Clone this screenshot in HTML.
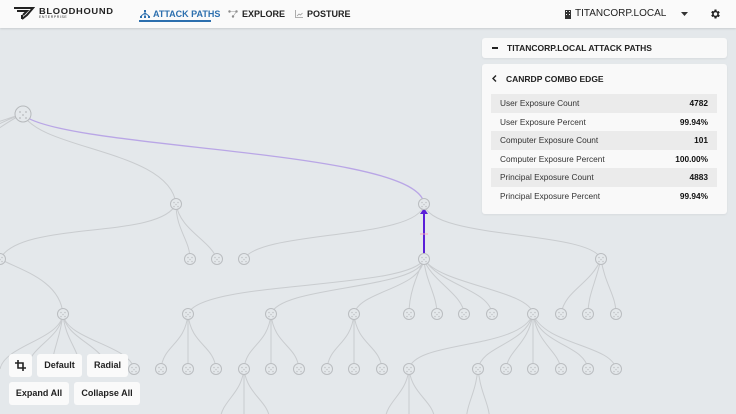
<!DOCTYPE html>
<html><head><meta charset="utf-8"><style>
*{box-sizing:border-box;margin:0;padding:0}
body{width:736px;height:414px;overflow:hidden;background:#e4e8eb;font-family:"Liberation Sans",sans-serif;position:relative}
.hdr{position:absolute;left:0;top:0;width:736px;height:28px;background:#fafafa;box-shadow:0 1px 2px rgba(0,0,0,.12);z-index:3}
.nav{position:absolute;top:9px;font-size:9px;font-weight:bold;color:#222}
.card{position:absolute;background:#f9f9f9;border-radius:3px;box-shadow:0 1px 2px rgba(0,0,0,.06)}
.row{position:absolute;left:9px;width:226px;height:18.5px;font-size:8.3px;color:#333;line-height:18.5px;padding:0 9px}
.row b{position:absolute;right:9px;color:#111}
.g{background:#ebebeb}
.btn{position:absolute;background:#fafafa;border-radius:3px;font-size:9px;font-weight:bold;color:#222;text-align:center;line-height:22px;height:23px}
</style></head><body>
<div class="hdr">
<svg style="position:absolute;left:13px;top:7px" width="22" height="13" viewBox="0 0 22 13"><path d="M1 1h19l-6 7-5 4M4 4h10l-4 4M9 8v4" fill="none" stroke="#222" stroke-width="2"/></svg>
<div style="position:absolute;left:39px;top:6px;font-size:8.5px;font-weight:bold;letter-spacing:.6px;color:#222;transform:scaleX(1.1);transform-origin:left">BLOODHOUND</div>
<div style="position:absolute;left:39px;top:15px;font-size:3.5px;letter-spacing:.6px;color:#333">ENTERPRISE</div>
<svg style="position:absolute;left:140px;top:10px" width="10" height="8"><g fill="#2c6fae"><rect x="4" y="0" width="2" height="2"/><rect x="0" y="6" width="2" height="2"/><rect x="4" y="6" width="2" height="2"/><rect x="8" y="6" width="2" height="2"/></g><path d="M5 2v4M1 6l4-3 4 3" stroke="#2c6fae" fill="none"/></svg>
<div class="nav" style="left:153px;color:#2c6fae">ATTACK PATHS</div>
<div style="position:absolute;left:139px;top:20px;width:72px;height:2px;background:#2c6fae"></div>
<svg style="position:absolute;left:228px;top:10px" width="10" height="8"><g fill="#888"><circle cx="1.5" cy="1.5" r="1.2"/><circle cx="8.5" cy="1.5" r="1.2"/><circle cx="5" cy="6.5" r="1.2"/></g><path d="M1.5 1.5h7M5 6.5L8.5 1.5" stroke="#999" stroke-width=".6"/></svg>
<div class="nav" style="left:242px">EXPLORE</div>
<svg style="position:absolute;left:295px;top:10px" width="8" height="8"><path d="M.5 0v7.5H8M2 6l2-2 1.5 1L7.5 3" stroke="#999" fill="none" stroke-width=".8"/></svg>
<div class="nav" style="left:307px">POSTURE</div>
<svg style="position:absolute;left:565px;top:10px" width="6" height="9"><rect x="0" y="0" width="6" height="9" fill="#333"/><g fill="#fff"><rect x="1" y="1" width="1" height="1"/><rect x="4" y="1" width="1" height="1"/><rect x="1" y="4" width="1" height="1"/><rect x="4" y="4" width="1" height="1"/></g></svg>
<div style="position:absolute;left:575px;top:8px;font-size:10px;color:#222">TITANCORP.LOCAL</div>
<svg style="position:absolute;left:681px;top:12px" width="7" height="4"><path d="M0 0h7L3.5 4z" fill="#333"/></svg>
<svg style="position:absolute;left:709px;top:8px" width="12" height="12" viewBox="0 0 24 24"><path fill="#222" d="M19.4 13a7.5 7.5 0 000-2l2.1-1.6-2-3.5-2.5 1a7 7 0 00-1.7-1L15 3h-4l-.4 2.8a7 7 0 00-1.7 1l-2.5-1-2 3.5L6.5 11a7.5 7.5 0 000 2l-2.1 1.6 2 3.5 2.5-1a7 7 0 001.7 1L11 21h4l.4-2.8a7 7 0 001.7-1l2.5 1 2-3.5zM13 15.5a3.5 3.5 0 110-7 3.5 3.5 0 010 7z"/></svg>
</div>

<svg style="position:absolute;left:0;top:0" width="736" height="414" fill="none" stroke="#c9cccf" stroke-width="1">
<defs><g id="n"><circle r="5.5" fill="#e4e8eb" stroke="#babdc0"/><g fill="#c2c5c8" stroke="none"><circle cx="-2" cy="-1.5" r=".8"/><circle cx="2" cy="-1.5" r=".8"/><circle cx="0" cy="0.5" r=".8"/><circle cx="-2" cy="2.5" r=".8"/><circle cx="2" cy="2.5" r=".8"/></g></g></defs>
<path d="M23 114C10 118 0 124-10 128M23 114C10 120 0 128-10 134M23 114C8 118 0 122-10 124"/>
<path d="M23 114C40 150 170 150 176 204"/>
<path d="M176 204C160 240 20 220 0 259M176 204C176 230 190 240 190 259M176 204C180 230 210 240 217 259"/>
<path d="M424 204C420 240 260 230 244 259M424 204C424 230 424 240 424 259M424 204C430 240 590 230 601 259"/>
<path d="M0 259C20 270 60 280 63 314"/>
<path d="M424 259C410 290 200 280 188 314M424 259C420 290 280 285 271 314M424 259C420 290 360 290 354 314M424 259C415 280 409 295 409 314M424 259C425 280 437 295 437 314M424 259C430 280 464 295 464 314M424 259C440 285 490 290 492 314M424 259C440 285 530 290 533 314"/>
<path d="M601 259C590 285 565 290 561 314M601 259C595 285 588 295 588 314M601 259C605 285 616 295 616 314"/>
<path d="M63 314C60 340 5 345 0 369M63 314C60 340 30 345 27 369M63 314C60 340 52 350 52 369M63 314C65 340 80 350 80 369M63 314C66 340 105 345 107 369M63 314C66 340 130 345 134 369"/>
<path d="M188 314C185 345 163 345 161 369M188 314V369M188 314C191 345 214 345 216 369"/>
<path d="M271 314C268 345 246 345 244 369M271 314V369M271 314C274 345 297 345 299 369"/>
<path d="M354 314C351 345 329 345 327 369M354 314V369M354 314C357 345 380 345 382 369"/>
<path d="M533 314C520 350 415 340 409 369M533 314C525 345 482 345 478 369M533 314C528 345 508 350 506 369M533 314V369M533 314C538 345 558 350 561 369M533 314C540 345 585 345 588 369M533 314C545 345 612 345 616 369"/>
<path d="M244 369C241 395 222 400 220 420M244 369V420M244 369C247 395 268 400 270 420M409 369C406 395 387 400 385 420M409 369V420M409 369C412 395 433 400 435 420M478 369C475 395 468 400 466 420M478 369C481 395 488 400 490 420"/>
<path d="M26 117C80 150 420 150 424 204" stroke="#b9a6e6" stroke-width="1.3"/>
<path d="M424 259V212" stroke="#5a1fd8" stroke-width="2"/><path d="M420 214l4-6 4 6z" fill="#5a1fd8" stroke="none"/>
<path d="M420 234h8" stroke="#f2a8c0" stroke-width="1"/>
<circle cx="23" cy="114" r="8" fill="#e4e8eb" stroke="#b6b9bc"/>
<g fill="#c2c5c8" stroke="none"><circle cx="20" cy="112" r="1"/><circle cx="26" cy="112" r="1"/><circle cx="23" cy="115" r="1"/><circle cx="20" cy="118" r="1"/><circle cx="26" cy="118" r="1"/></g>
<use href="#n" x="176" y="204"/><use href="#n" x="424" y="204"/>
<use href="#n" x="0" y="259"/><use href="#n" x="190" y="259"/><use href="#n" x="217" y="259"/><use href="#n" x="244" y="259"/><use href="#n" x="424" y="259"/><use href="#n" x="601" y="259"/>
<use href="#n" x="63" y="314"/><use href="#n" x="188" y="314"/><use href="#n" x="271" y="314"/><use href="#n" x="354" y="314"/><use href="#n" x="409" y="314"/><use href="#n" x="437" y="314"/><use href="#n" x="464" y="314"/><use href="#n" x="492" y="314"/><use href="#n" x="533" y="314"/><use href="#n" x="561" y="314"/><use href="#n" x="588" y="314"/><use href="#n" x="616" y="314"/>
<use href="#n" x="134" y="369"/><use href="#n" x="161" y="369"/><use href="#n" x="188" y="369"/><use href="#n" x="216" y="369"/><use href="#n" x="244" y="369"/><use href="#n" x="271" y="369"/><use href="#n" x="299" y="369"/><use href="#n" x="327" y="369"/><use href="#n" x="354" y="369"/><use href="#n" x="382" y="369"/><use href="#n" x="409" y="369"/><use href="#n" x="478" y="369"/><use href="#n" x="506" y="369"/><use href="#n" x="533" y="369"/><use href="#n" x="561" y="369"/><use href="#n" x="588" y="369"/><use href="#n" x="616" y="369"/>
</svg>

<div class="card" style="left:482px;top:38px;width:245px;height:20px">
<div style="position:absolute;left:10px;top:9px;width:6px;height:1.5px;background:#222"></div>
<div style="position:absolute;left:25px;top:5px;font-size:8.5px;font-weight:bold;color:#222">TITANCORP.LOCAL ATTACK PATHS</div>
</div>
<div class="card" style="left:482px;top:64px;width:245px;height:150px">
<svg style="position:absolute;left:10px;top:11px" width="5" height="7"><path d="M4 .5L1 3.5 4 6.5" fill="none" stroke="#222" stroke-width="1.4"/></svg>
<div style="position:absolute;left:24px;top:10px;font-size:8.5px;font-weight:bold;color:#222">CANRDP COMBO EDGE</div>
<div class="row g" style="top:30px">User Exposure Count<b>4782</b></div>
<div class="row" style="top:48.5px">User Exposure Percent<b>99.94%</b></div>
<div class="row g" style="top:67px">Computer Exposure Count<b>101</b></div>
<div class="row" style="top:85.5px">Computer Exposure Percent<b>100.00%</b></div>
<div class="row g" style="top:104px">Principal Exposure Count<b>4883</b></div>
<div class="row" style="top:122.5px">Principal Exposure Percent<b>99.94%</b></div>
</div>

<div class="btn" style="left:9px;top:354px;width:23px"><svg width="11" height="11" viewBox="0 0 11 11" style="margin-top:6px"><path d="M3 0v8h8M0 3h8v8" fill="none" stroke="#222" stroke-width="1.6"/></svg></div>
<div class="btn" style="left:37px;top:354px;width:45px">Default</div>
<div class="btn" style="left:87px;top:354px;width:41px">Radial</div>
<div class="btn" style="left:9px;top:382px;width:60px">Expand All</div>
<div class="btn" style="left:74px;top:382px;width:66px">Collapse All</div>
</body></html>
